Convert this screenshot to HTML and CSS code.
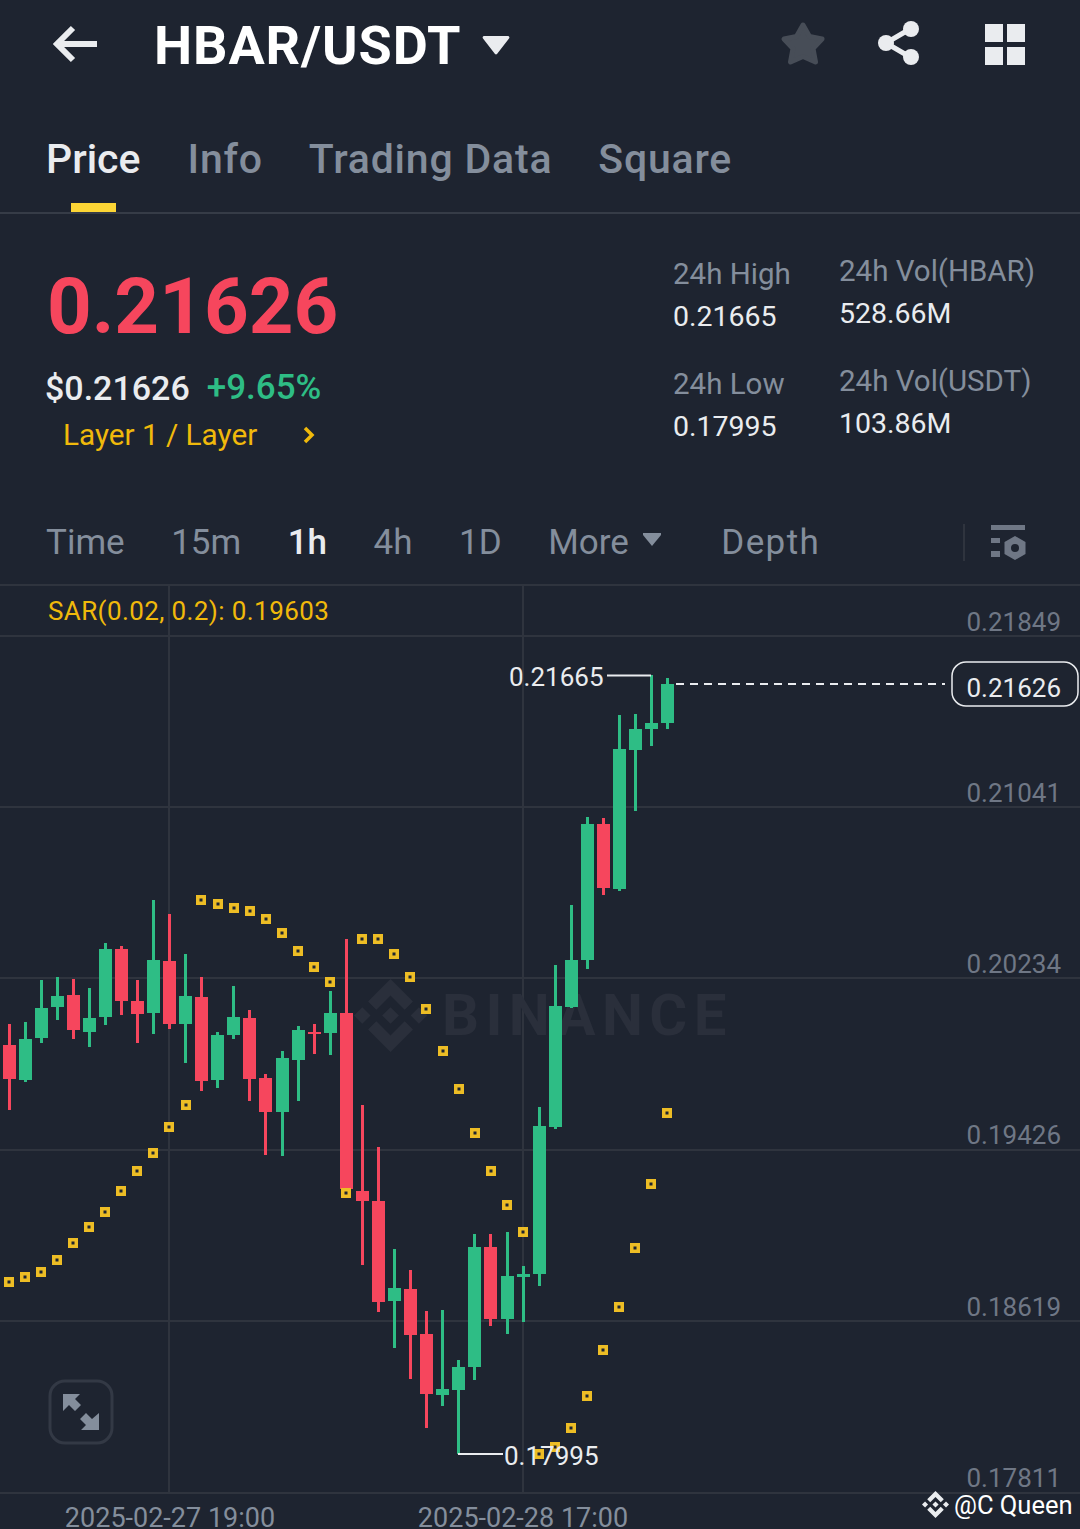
FILE: index.html
```html
<!DOCTYPE html>
<html>
<head>
    <meta charset="UTF-8">
    <link rel="stylesheet" href="styles.css">
</head>
<body>
    <svg class="defs" width="0" height="0">
        <symbol id="bnb" viewBox="0 0 126.61 126.61">
            <path d="M38.73 53.2l24.59-24.58 24.6 24.6 14.3-14.31L63.32 0 24.42 38.9z"/>
            <path d="M0 63.31l14.3-14.31 14.31 14.31-14.31 14.3z"/>
            <path d="M38.73 73.41l24.59 24.59 24.6-24.6 14.31 14.29-38.9 38.91-38.91-38.88-.02-.02z"/>
            <path d="M98.28 63.31l14.3-14.31 14.31 14.31-14.31 14.3z"/>
            <path d="M77.83 63.3L63.32 48.78 48.81 63.28l14.51 14.5z"/>
        </symbol>
    </svg>

    <header class="topbar">
        <svg class="back" width="46" height="40" viewBox="0 0 46 40">
            <path d="M45 20H6M21 4L5 20l16 16"/>
        </svg>
        <h1 class="pair">HBAR/USDT</h1>
        <svg class="caret" width="28" height="21" viewBox="0 0 28 21">
            <path d="M2 1h24a1.500 1.500 0 0 1 1 2.500L15 19a1.500 1.500 0 0 1-2 0L1 3.500A1.500 1.500 0 0 1 2 1z"/>
        </svg>
        <div class="top-icons">
            <svg class="star" width="46" height="46" viewBox="0 0 46 46">
                <path d="M23 4l6.500 11.500L42 18l-9 9.500L35.500 41 23 35.500 10.500 41 13 27.500 4 18l12.500-2.500z"/>
            </svg>
            <svg class="share" width="44" height="46" viewBox="0 0 44 46">
                <path d="M33 8L9 22l24 14"/>
                <circle cx="34" cy="8" r="8"/>
                <circle cx="9" cy="22" r="8"/>
                <circle cx="34" cy="36" r="8"/>
            </svg>
            <div class="grid-icon"><i></i><i></i><i></i><i></i></div>
        </div>
    </header>

    <nav class="tabs">
        <a class="tab active">Price</a>
        <a class="tab">Info</a>
        <a class="tab">Trading Data</a>
        <a class="tab">Square</a>
    </nav>

    <section class="quote">
        <div class="quote-main">
            <div class="last-price">0.21626</div>
            <div class="quote-sub">
                <span class="fiat">$0.21626</span>
                <span class="change">+9.65%</span>
            </div>
            <div class="category">
                <span>Layer 1 / Layer</span>
                <svg width="14" height="18" viewBox="0 0 14 18"><path d="M3 2l7 7-7 7"/></svg>
            </div>
        </div>
        <div class="stat-col">
            <div class="stat-label">24h High</div>
            <div class="stat-value">0.21665</div>
            <div class="stat-label stat-gap">24h Low</div>
            <div class="stat-value">0.17995</div>
        </div>
        <div class="stat-col stat-col-vol">
            <div class="stat-label">24h Vol(HBAR)</div>
            <div class="stat-value">528.66M</div>
            <div class="stat-label stat-gap">24h Vol(USDT)</div>
            <div class="stat-value">103.86M</div>
        </div>
    </section>

    <div class="intervals">
        <span>Time</span>
        <span>15m</span>
        <span class="current">1h</span>
        <span>4h</span>
        <span>1D</span>
        <span class="more">More
            <svg width="20" height="15" viewBox="0 0 20 15"><path d="M1 1h18v2l-9 11-9-11z"/></svg>
        </span>
        <span class="depth">Depth</span>
        <div class="interval-tools">
            <svg width="36" height="37" viewBox="0 0 36 37">
                <path d="M1 1h34v5H1zM1 14h9v5H1zM1 27h9v6H1z"/>
                <path fill-rule="evenodd" d="M25 12l10.500 6v12L25 36l-10.500-6V18zm0 8a4 4 0 1 0 0 8 4 4 0 0 0 0-8z"/>
            </svg>
        </div>
    </div>

    <svg class="chart" width="1080" height="943" viewBox="0 586 1080 943">
        <defs>
            <path id="sar" d="M9 1282h0M25 1277h0M41 1272h0M57 1260h0M73 1243h0M89 1227h0M105 1212h0M121 1191h0M137 1171h0M153 1153h0M169 1127h0M186 1105h0M201 900h0M218 904h0M234 908h0M250 911h0M266 919h0M282 933h0M298 951h0M314 967h0M330 982h0M346 1193h0M362 939h0M378 939h0M394 954h0M410 977h0M426 1009h0M443 1051h0M459 1089h0M475 1133h0M491 1171h0M507 1205h0M523 1232h0M539 1454h0M555 1447h0M571 1428h0M587 1396h0M603 1350h0M619 1307h0M635 1248h0M651 1184h0M667 1113h0"/>
        </defs>

        <path class="gridline" d="M0 636H1080M0 807H1080M0 978H1080M0 1150H1080M0 1321H1080M0 1493H1080M169 586V1493M523 586V1493"/>

        <use class="mark" href="#bnb" x="354" y="979" width="73" height="73"/>
        <text class="mark-text" x="442" y="1035">BINANCE</text>

        <g transform="translate(.5 0)">
            <path class="wick up" d="M25 1022V1082M41 980V1043M57 977V1020M89 988V1047M105 943V1025M153 900V1034M185 954V1063M217 1032V1088M233 986V1039M282 1051V1156M298 1026V1101M330 991V1055M394 1249V1348M442 1310V1406M458 1360V1454M474 1234V1380M507 1232V1334M523 1266V1322M539 1107V1286M555 965V1129M571 905V1008M587 817V969M619 715V891M635 714V811M651 675V746M667 678V729"/>
            <path class="wick down" d="M9 1024V1110M73 979V1039M121 946V1015M137 980V1043M169 914V1029M201 977V1091M249 1010V1101M265 1074V1155M314 1024V1054M346 939V1197M362 1105V1265M378 1147V1312M410 1270V1379M426 1311V1428M490 1234V1326M603 818V895"/>
            <path class="body up" d="M25 1039V1080M41 1008V1038M57 996V1007M89 1018V1032M105 949V1017M153 960V1013M185 996V1024M217 1035V1080M233 1017V1035M282 1058V1112M298 1030V1060M330 1013V1033M394 1288V1301M442 1389V1395M458 1367V1390M474 1247V1367M507 1276V1319M523 1274V1277M539 1126V1274M555 1006V1127M571 960V1007M587 824V960M619 749V889M635 729V750M651 723V729M667 684V723"/>
            <path class="body down" d="M9 1045V1079M73 995V1030M121 949V1001M137 1001V1014M169 961V1024M201 997V1081M249 1018V1079M265 1078V1112M314 1032V1034M346 1013V1189M362 1191V1201M378 1201V1302M410 1289V1335M426 1334V1394M490 1247V1319M603 824V888"/>
        </g>

        <use class="sar-dot" href="#sar"/>
        <use class="sar-hole" href="#sar"/>

        <text class="sar-label" x="48" y="620">SAR(0.02, 0.2): 0.19603</text>

        <g class="axis">
            <text x="1061" y="631">0.21849</text>
            <text x="1061" y="802">0.21041</text>
            <text x="1061" y="973">0.20234</text>
            <text x="1061" y="1144">0.19426</text>
            <text x="1061" y="1316">0.18619</text>
            <text x="1061" y="1487">0.17811</text>
        </g>

        <path class="leader" d="M607 675.500H651M458 1454H503"/>
        <text class="extreme" x="509" y="686">0.21665</text>
        <text class="extreme" x="504" y="1465">0.17995</text>

        <path class="last-line" d="M676 684H945"/>
        <rect class="last-box" x="952" y="662" width="126" height="44" rx="14"/>
        <text class="last-text" x="1061" y="697">0.21626</text>

        <g class="times">
            <text x="170" y="1527">2025-02-27 19:00</text>
            <text x="523" y="1527">2025-02-28 17:00</text>
        </g>

        <rect class="expand-box" x="50" y="1381" width="62" height="62" rx="15"/>
        <path class="expand" d="M63 1394h17l-5 5 6 6-6 6-6-6-6 6zM99 1430H81l5-5-6-6 6-6 6 6 7-6z"/>

        <use class="credit-logo" href="#bnb" x="922" y="1491" width="27" height="27"/>
        <text class="credit" x="954" y="1514">@C Queen</text>
    </svg>
</body>
</html>
```

FILE: styles.css
```css
html, body { margin: 0; padding: 0; }
body { width: 1080px; height: 1529px; overflow: hidden; background: #1e2430; color: #eaecef; font-family: Roboto, "Liberation Sans", sans-serif; }
.defs { position: absolute; }

.topbar { display: flex; align-items: center; height: 88px; padding: 0 55px 0 52px; }
.back { fill: none; stroke: #eaecef; stroke-width: 6; }
.pair { margin: 4px 0 0 56px; font-size: 54px; font-weight: 700; line-height: 60px; color: #fff; letter-spacing: .9px; }
.caret { margin: 2px 0 0 21px; fill: #eaecef; }
.top-icons { display: flex; align-items: center; margin-left: auto; }
.star { fill: #474d57; stroke: #474d57; stroke-width: 5; stroke-linejoin: round; }
.share { margin-left: 51px; fill: #eaecef; stroke: #eaecef; }
.share path { fill: none; stroke-width: 5; }
.share circle { stroke: none; }
.grid-icon { display: grid; grid-template-columns: 18px 18px; gap: 5px 4px; margin-left: 64px; }
.grid-icon i { display: block; height: 18px; background: #eaecef; }

.tabs { display: flex; gap: 46px; height: 126px; box-sizing: border-box; padding: 46px 0 0 46px; border-bottom: 2px solid #363c47; }
.tab { position: relative; font-size: 41px; line-height: 50px; font-weight: 500; letter-spacing: .8px; color: #848e9c; }
.tab.active { margin-right: 1px; letter-spacing: 0; color: #eaecef; }
.tab.active::after { content: ""; position: absolute; left: 25px; bottom: 0; width: 45px; height: 9px; background: #fcd535; }

.quote { display: flex; height: 286px; box-sizing: border-box; }
.quote-main { width: 673px; padding: 48px 0 0 47px; box-sizing: border-box; }
.last-price { font-size: 78px; line-height: 90px; font-weight: 700; color: #f6465d; }
.quote-sub { display: flex; gap: 17px; margin: 16px 0 0 -2px; font-size: 34px; line-height: 40px; font-weight: 500; }
.change { font-size: 35px; color: #2ebd85; }
.category { display: flex; align-items: center; gap: 45px; margin: 9px 0 0 16px; font-size: 29.700px; line-height: 36px; color: #f0b90b; }
.category svg { fill: none; stroke: #f0b90b; stroke-width: 3.500; }

.stat-col { width: 166px; padding-top: 40px; line-height: 40px; }
.stat-col-vol { width: 241px; padding-top: 37px; }
.stat-label { font-size: 29.500px; color: #848e9c; }
.stat-value { margin-top: 3px; font-size: 28.500px; color: #eaecef; }
.stat-gap { margin-top: 27px; }

.intervals { display: flex; align-items: center; gap: 46.500px; height: 86px; box-sizing: border-box; padding-left: 46px; border-bottom: 2px solid #2f343e; font-size: 35px; color: #848e9c; }
.intervals .current { font-weight: 500; color: #eaecef; }
.more { display: flex; align-items: center; gap: 13px; }
.more svg { fill: #848e9c; margin-bottom: 6px; }
.depth { margin-left: 13px; letter-spacing: 1.400px; }
.interval-tools { display: flex; margin-left: auto; margin-right: 54px; padding-left: 25px; border-left: 2px solid #2f343e; }
.interval-tools svg { fill: #6f7785; display: block; }

.chart { display: block; }
.gridline { fill: none; stroke: #2f343e; stroke-width: 2; }
.mark { fill: #2a2f3b; }
.mark-text { font-size: 58px; font-weight: 700; letter-spacing: 6.400px; fill: #2a2f3b; }
.wick { fill: none; stroke-width: 3; }
.body { fill: none; stroke-width: 13; }
.up { stroke: #2ebd85; }
.down { stroke: #f6465d; }
.sar-dot, .sar-hole { fill: none; stroke-linecap: square; }
.sar-dot { stroke: #edbd25; stroke-width: 10; }
.sar-hole { stroke: #1e2430; stroke-width: 3; }
.sar-label { font-size: 26px; letter-spacing: .4px; fill: #f0b90b; }
.axis text { font-size: 26px; text-anchor: end; fill: #6f7785; }
.leader { fill: none; stroke: #eaecef; stroke-width: 2; }
.extreme { font-size: 26px; fill: #eaecef; }
.last-line { fill: none; stroke: #eaecef; stroke-width: 2; stroke-dasharray: 8 6; }
.last-box { fill: #1e2430; stroke: #eaecef; stroke-width: 1.500; }
.last-text { font-size: 26px; text-anchor: end; fill: #eaecef; }
.times text { font-size: 27px; text-anchor: middle; fill: #848e9c; }
.expand-box { fill: none; stroke: #333945; stroke-width: 3; }
.expand { fill: #848e9c; }
.credit-logo { fill: #eaecef; }
.credit { font-size: 25.500px; fill: #fff; }
```
